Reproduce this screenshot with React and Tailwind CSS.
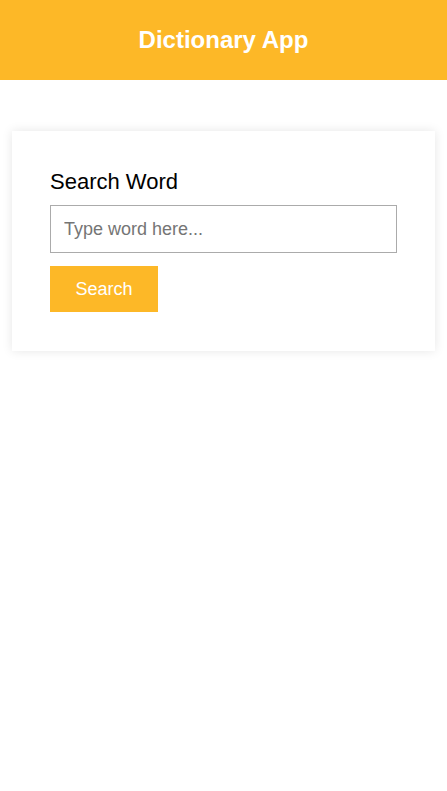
import React, { useState } from 'react';

function App() {
  const [word, setWord] = useState("");

  const handleSearch = (e) => {
    e.preventDefault();
  };

  return (
    <div className="min-h-screen bg-white font-['Liberation_Sans',Arial,sans-serif]">
      <header className="bg-[#fdb827] h-[80px] flex items-center justify-center">
        <h1 className="text-white text-[24px] font-bold leading-none">Dictionary App</h1>
      </header>

      <div className="mx-[12px] mt-[51px] bg-white shadow-[0_0_10px_rgba(0,0,0,0.1)] px-[38px] pt-[38px] pb-[39px]">
        <form onSubmit={handleSearch} className="flex flex-col">
          <label className="text-[22px] leading-[25px] text-black mb-[11px]">Search Word</label>
          <input
            type="text"
            value={word}
            onChange={e => setWord(e.target.value)}
            placeholder="Type word here..."
            className="h-[48px] w-full border border-[#ababab] px-[13px] text-[18px] text-black placeholder:text-[#757575] outline-none"
          />
          <button
            type="submit"
            className="mt-[13px] h-[46px] w-[108px] bg-[#fdb827] text-white text-[18px]"
          >
            Search
          </button>
        </form>
      </div>
    </div>
  );
}

export default App;
